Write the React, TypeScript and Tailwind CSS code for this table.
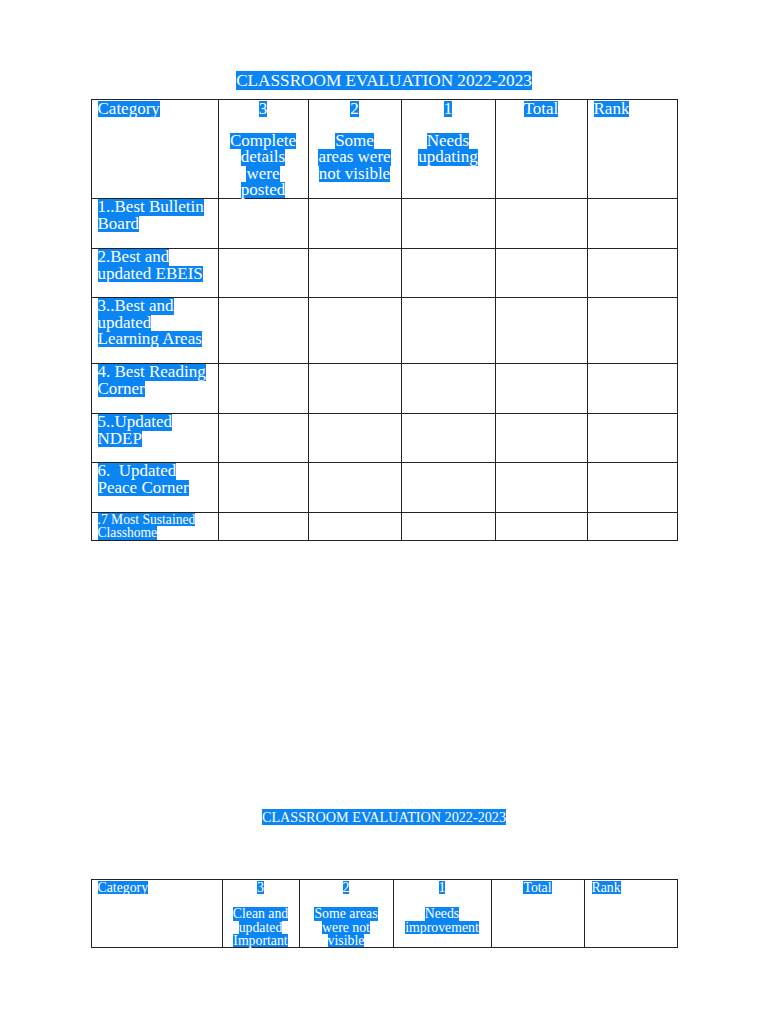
const HL = 'bg-[#0c85f4] text-white'

type Row = { lines: string[]; h: string; small?: boolean }

const ROWS: Row[] = [
  { lines: ['1..Best Bulletin', 'Board'], h: 'h-[50px]' },
  { lines: ['2.Best and', 'updated EBEIS'], h: 'h-[49px]' },
  { lines: ['3..Best and', 'updated', 'Learning Areas'], h: 'h-[66px]' },
  { lines: ['4. Best Reading', 'Corner'], h: 'h-[50px]' },
  { lines: ['5..Updated', 'NDEP'], h: 'h-[49px]' },
  { lines: ['6.  Updated', 'Peace Corner'], h: 'h-[50px]' },
  { lines: ['.7 Most Sustained', 'Classhome'], h: 'h-[27px]', small: true },
]

function Lines({ lines, center, gapFirst }: { lines: string[]; center?: boolean; gapFirst?: boolean }) {
  return (
    <div>
      {lines.map((l, i) => (
        <span
          key={i}
          className={`block w-fit whitespace-pre ${HL} ${center ? 'mx-auto' : ''} ${gapFirst && i === 1 ? 'mt-[1lh]' : ''}`}
        >
          {l}
        </span>
      ))}
    </div>
  )
}

function Empty() {
  return (
    <>
      <td className="border border-[#222]" />
      <td className="border border-[#222]" />
      <td className="border border-[#222]" />
      <td className="border border-[#222]" />
      <td className="border border-[#222]" />
    </>
  )
}

export default function App() {
  return (
    <div className="min-h-[1024px] bg-white font-['Liberation_Serif',serif] text-black">
      <div className="pt-[73px]">
        <p className="text-center text-[17.2px] leading-[16.5px]">
          <span className={HL}>CLASSROOM EVALUATION 2022-2023</span>
        </p>

        <table className="mx-auto mt-[9px] w-[586px] table-fixed border-collapse border border-[#222] text-[17px] leading-[16.3px]">
          <colgroup>
            <col className="w-[127px]" />
            <col className="w-[90px]" />
            <col className="w-[93px]" />
            <col className="w-[94px]" />
            <col className="w-[92px]" />
            <col className="w-[90px]" />
          </colgroup>
          <tbody>
            <tr className="h-[98px]">
              <td className="border border-[#222] px-[6px] pt-[1px] align-top">
                <Lines lines={['Category']} />
              </td>
              <td className="border border-[#222] pt-[1px] align-top">
                <Lines lines={['3', 'Complete', 'details', 'were', 'posted']} center gapFirst />
              </td>
              <td className="border border-[#222] pt-[1px] align-top">
                <Lines lines={['2', 'Some', 'areas were', 'not visible']} center gapFirst />
              </td>
              <td className="border border-[#222] pt-[1px] align-top">
                <Lines lines={['1', 'Needs', 'updating']} center gapFirst />
              </td>
              <td className="border border-[#222] pt-[1px] align-top">
                <Lines lines={['Total']} center />
              </td>
              <td className="border border-[#222] px-[6px] pt-[1px] align-top">
                <Lines lines={['Rank']} />
              </td>
            </tr>
            {ROWS.map((r, i) => (
              <tr key={i} className={r.h}>
                <td
                  className={`border border-[#222] px-[6px] align-top ${r.small ? 'text-[13.6px] leading-[13.2px]' : ''}`}
                >
                  <Lines lines={r.lines} />
                </td>
                <Empty />
              </tr>
            ))}
          </tbody>
        </table>

        <p className="mt-[269px] text-center text-[14.2px] leading-[15px]">
          <span className={HL}>CLASSROOM EVALUATION 2022-2023</span>
        </p>

        <table className="mx-auto mt-[54px] w-[586px] table-fixed border-collapse border border-[#222] text-[13.8px] leading-[13.3px]">
          <colgroup>
            <col className="w-[131px]" />
            <col className="w-[77px]" />
            <col className="w-[94px]" />
            <col className="w-[98px]" />
            <col className="w-[93px]" />
            <col className="w-[93px]" />
          </colgroup>
          <tbody>
            <tr className="h-[66px]">
              <td className="border border-[#222] px-[6px] pt-[1px] align-top">
                <Lines lines={['Category']} />
              </td>
              <td className="border border-[#222] pt-[1px] align-top">
                <Lines lines={['3', 'Clean and', 'updated', 'Important']} center gapFirst />
              </td>
              <td className="border border-[#222] pt-[1px] align-top">
                <Lines lines={['2', 'Some areas', 'were not', 'visible']} center gapFirst />
              </td>
              <td className="border border-[#222] pt-[1px] align-top">
                <Lines lines={['1', 'Needs', 'improvement']} center gapFirst />
              </td>
              <td className="border border-[#222] pt-[1px] align-top">
                <Lines lines={['Total']} center />
              </td>
              <td className="border border-[#222] px-[7px] pt-[1px] align-top">
                <Lines lines={['Rank']} />
              </td>
            </tr>
          </tbody>
        </table>
      </div>
    </div>
  )
}
